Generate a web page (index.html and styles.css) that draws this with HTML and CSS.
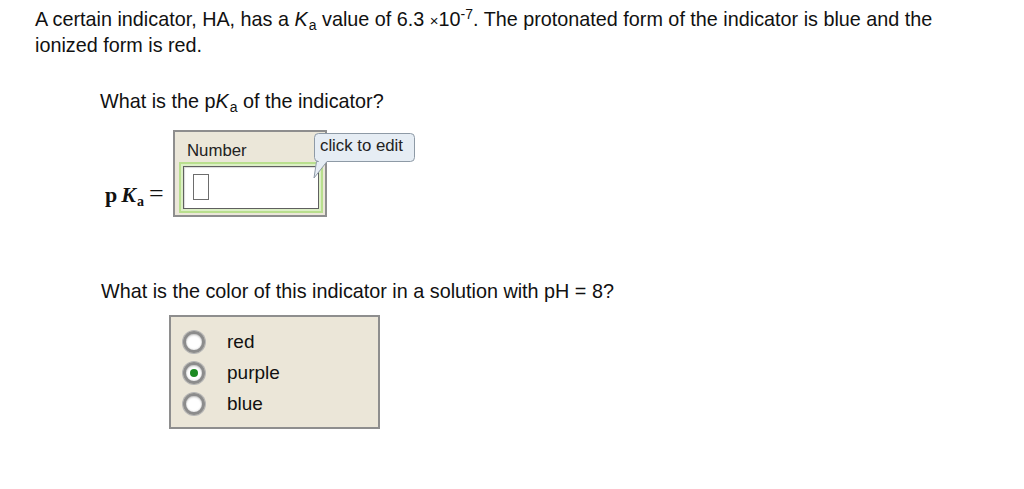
FILE: index.html
```html
<!DOCTYPE html>
<html>
<head>
<meta charset="utf-8">
<link rel="stylesheet" href="styles.css">
</head>
<body>
<div class="page">
  <p class="intro">A certain indicator, HA, has a <i>K</i><sub>a</sub> value of 6.3 <span class="times">×</span>10<sup>-7</sup>. The protonated form of the indicator is blue and the ionized form is red.</p>

  <p class="q1">What is the p<i>K</i><sub>a</sub> of the indicator?</p>

  <div class="answer-row">
    <div class="math-label"><b>p</b><b class="mk">K</b><sub class="msub">a</sub><span class="eq">=</span></div>
    <div class="widget">
      <div class="widget-head">Number</div>
      <div class="widget-body">
        <div class="glow">
          <div class="input"><span class="caret-box"></span></div>
        </div>
      </div>
      <div class="tooltip">
        <svg class="tip-shape" width="104" height="48" viewBox="-1 -1 104 48">
          <path d="M4.5 0.5 H96.5 A4 4 0 0 1 100.5 4.5 V24.5 A4 4 0 0 1 96.5 28.5 H13 L0 45 L2.5 28.5 H4.5 A4 4 0 0 1 0.5 24.5 V4.5 A4 4 0 0 1 4.5 0.5 Z" fill="#e6edf4" stroke="#8e9aa6" stroke-width="1"/>
        </svg>
        <span class="tip-text">click to edit</span>
      </div>
    </div>
  </div>

  <p class="q2">What is the color of this indicator in a solution with pH = 8?</p>

  <div class="choices">
    <div class="choice"><span class="radio"></span><span class="choice-label">red</span></div>
    <div class="choice"><span class="radio checked"></span><span class="choice-label">purple</span></div>
    <div class="choice"><span class="radio"></span><span class="choice-label">blue</span></div>
  </div>
</div>
</body>
</html>
```
FILE: styles.css
```css
html, body {
  margin: 0;
  padding: 0;
  background: #ffffff;
}
body {
  font-family: "Liberation Sans", Arial, sans-serif;
  font-size: 19.8px;
  color: #111;
}
.page {
  padding: 7px 0 0 35px;
}
p {
  margin: 0;
}
.intro {
  line-height: 24px;
  width: 920px;
}
i {
  padding-right: 1px;
}
sub, sup {
  font-size: 14px;
  line-height: 0;
}
sub {
  vertical-align: -4px;
}
sup {
  vertical-align: 7px;
}
.times {
  font-size: 15px;
}
.q1 {
  margin: 32px 0 0 65px;
  line-height: 24px;
}
.answer-row {
  display: flex;
  margin: 17px 0 0 68px;
}
.math-label {
  width: 70px;
  padding-top: 52px;
  padding-left: 2px;
  box-sizing: border-box;
  font-family: "Liberation Serif", "Times New Roman", serif;
  font-size: 22px;
  color: #111;
  line-height: 24px;
  white-space: nowrap;
}
.mk {
  font-style: italic;
  margin-left: 4px;
}
.msub {
  font-size: 14px;
  font-weight: bold;
  vertical-align: -4px;
  margin-left: 1px;
}
.eq {
  font-size: 26px;
  margin-left: 5px;
}
.widget {
  position: relative;
  width: 150px;
  border: 2px solid #8e8e8e;
  background: #ebe7d9;
}
.widget-head {
  height: 30px;
  padding-left: 12px;
  font-size: 16.8px;
  line-height: 38px;
  color: #222;
}
.widget-body {
  padding: 0 2px 2px 4px;
}
.glow {
  border: 2px solid #b9df8e;
  background: #dcefc6;
  padding: 2px;
}
.input {
  background: #fff;
  border: 1px solid #5f5f5f;
  box-shadow: inset 1px 1px 1px rgba(0,0,0,0.15);
  padding: 7px 0 0 9px;
  box-sizing: border-box;
  height: 43px;
}
.caret-box {
  display: block;
  width: 14px;
  height: 24px;
  border: 1px solid #6d6d6d;
  background: #fff;
}
.tooltip {
  position: absolute;
  left: 138px;
  top: 0;
  width: 104px;
  height: 48px;
}
.tip-shape {
  position: absolute;
  left: 0;
  top: 0;
}
.tip-text {
  position: absolute;
  left: 7px;
  top: 4px;
  font-size: 16.8px;
  color: #222;
  white-space: nowrap;
}
.q2 {
  margin: 62px 0 0 66px;
  line-height: 24px;
}
.choices {
  margin: 12px 0 0 134px;
  width: 207px;
  border: 2px solid #8e8e8e;
  background: #ebe6d8;
  padding: 9px 0 8px 0;
}
.choice {
  display: flex;
  align-items: center;
  height: 31px;
}
.radio {
  width: 16px;
  height: 16px;
  margin-left: 12px;
  border-radius: 50%;
  border: 3px solid #8c8c8c;
  background: radial-gradient(circle at 50% 45%, #ffffff 55%, #d8d8d8 100%);
  box-shadow: 0 0 0 1px #b5b5b5, inset 0 1px 2px rgba(0,0,0,0.25);
  display: flex;
  align-items: center;
  justify-content: center;
}
.radio.checked::after {
  content: "";
  width: 8px;
  height: 8px;
  border-radius: 50%;
  background: #1c8a22;
}
.choice-label {
  margin-left: 22px;
  font-size: 19px;
  color: #111;
}
```
